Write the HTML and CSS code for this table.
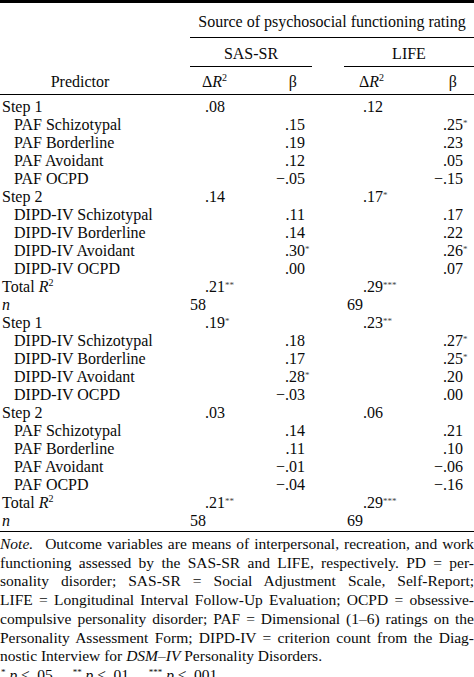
FILE: index.html
```html
<!DOCTYPE html>
<html>
<head>
<meta charset="utf-8">
<link rel="stylesheet" href="styles.css">
</head>
<body>
<table class="tbl">
  <colgroup>
    <col class="c-stub"><col class="c-dr"><col class="c-b"><col class="c-gap"><col class="c-dr2"><col class="c-b2">
  </colgroup>
  <thead>
    <tr class="h1">
      <th></th>
      <th colspan="5" class="src rule">Source of psychosocial functioning rating</th>
    </tr>
    <tr class="h2">
      <th></th>
      <th colspan="2" class="grp rule">SAS-SR</th>
      <th></th>
      <th colspan="2" class="grp rule">LIFE</th>
    </tr>
    <tr class="h3">
      <th class="pred">Predictor</th>
      <th class="hd1">Δ<i>R</i><sup class="sq">2</sup></th>
      <th class="hb1">β</th>
      <th></th>
      <th class="hd2">Δ<i>R</i><sup class="sq">2</sup></th>
      <th class="hb2">β</th>
    </tr>
  </thead>
  <tbody>
    <tr class="first"><td class="stub">Step 1</td><td class="d1">.08</td><td class="v1"></td><td></td><td class="d2">.12</td><td class="v2"></td></tr>
    <tr><td class="ind">PAF Schizotypal</td><td></td><td class="v1">.15<span class="st"></span></td><td></td><td></td><td class="v2">.25<span class="st"><sup class="s">*</sup></span></td></tr>
    <tr><td class="ind">PAF Borderline</td><td></td><td class="v1">.19<span class="st"></span></td><td></td><td></td><td class="v2">.23<span class="st"></span></td></tr>
    <tr><td class="ind">PAF Avoidant</td><td></td><td class="v1">.12<span class="st"></span></td><td></td><td></td><td class="v2">.05<span class="st"></span></td></tr>
    <tr><td class="ind">PAF OCPD</td><td></td><td class="v1">−.05<span class="st"></span></td><td></td><td></td><td class="v2">−.15<span class="st"></span></td></tr>
    <tr><td class="stub">Step 2</td><td class="d1">.14</td><td></td><td></td><td class="d2">.17<sup class="s">*</sup></td><td></td></tr>
    <tr><td class="ind">DIPD-IV Schizotypal</td><td></td><td class="v1">.11<span class="st"></span></td><td></td><td></td><td class="v2">.17<span class="st"></span></td></tr>
    <tr><td class="ind">DIPD-IV Borderline</td><td></td><td class="v1">.14<span class="st"></span></td><td></td><td></td><td class="v2">.22<span class="st"></span></td></tr>
    <tr><td class="ind">DIPD-IV Avoidant</td><td></td><td class="v1">.30<span class="st"><sup class="s">*</sup></span></td><td></td><td></td><td class="v2">.26<span class="st"><sup class="s">*</sup></span></td></tr>
    <tr><td class="ind">DIPD-IV OCPD</td><td></td><td class="v1">.00<span class="st"></span></td><td></td><td></td><td class="v2">.07<span class="st"></span></td></tr>
    <tr><td class="stub">Total <i>R</i><sup class="sq">2</sup></td><td class="d1">.21<sup class="s">**</sup></td><td></td><td></td><td class="d2">.29<sup class="s">***</sup></td><td></td></tr>
    <tr><td class="stub"><i>n</i></td><td class="d1 nn">58</td><td></td><td></td><td class="d2 nn">69</td><td></td></tr>
    <tr><td class="stub">Step 1</td><td class="d1">.19<sup class="s">*</sup></td><td></td><td></td><td class="d2">.23<sup class="s">**</sup></td><td></td></tr>
    <tr><td class="ind">DIPD-IV Schizotypal</td><td></td><td class="v1">.18<span class="st"></span></td><td></td><td></td><td class="v2">.27<span class="st"><sup class="s">*</sup></span></td></tr>
    <tr><td class="ind">DIPD-IV Borderline</td><td></td><td class="v1">.17<span class="st"></span></td><td></td><td></td><td class="v2">.25<span class="st"><sup class="s">*</sup></span></td></tr>
    <tr><td class="ind">DIPD-IV Avoidant</td><td></td><td class="v1">.28<span class="st"><sup class="s">*</sup></span></td><td></td><td></td><td class="v2">.20<span class="st"></span></td></tr>
    <tr><td class="ind">DIPD-IV OCPD</td><td></td><td class="v1">−.03<span class="st"></span></td><td></td><td></td><td class="v2">.00<span class="st"></span></td></tr>
    <tr><td class="stub">Step 2</td><td class="d1">.03</td><td></td><td></td><td class="d2">.06</td><td></td></tr>
    <tr><td class="ind">PAF Schizotypal</td><td></td><td class="v1">.14<span class="st"></span></td><td></td><td></td><td class="v2">.21<span class="st"></span></td></tr>
    <tr><td class="ind">PAF Borderline</td><td></td><td class="v1">.11<span class="st"></span></td><td></td><td></td><td class="v2">.10<span class="st"></span></td></tr>
    <tr><td class="ind">PAF Avoidant</td><td></td><td class="v1">−.01<span class="st"></span></td><td></td><td></td><td class="v2">−.06<span class="st"></span></td></tr>
    <tr><td class="ind">PAF OCPD</td><td></td><td class="v1">−.04<span class="st"></span></td><td></td><td></td><td class="v2">−.16<span class="st"></span></td></tr>
    <tr><td class="stub">Total <i>R</i><sup class="sq">2</sup></td><td class="d1">.21<sup class="s">**</sup></td><td></td><td></td><td class="d2">.29<sup class="s">***</sup></td><td></td></tr>
    <tr class="last"><td class="stub"><i>n</i></td><td class="d1 nn">58</td><td></td><td></td><td class="d2 nn">69</td><td></td></tr>
  </tbody>
</table>
<div class="note">
  <div class="ln j"><i class="note-lbl">Note.</i>Outcome variables are means of interpersonal, recreation, and work</div>
  <div class="ln j">functioning assessed by the SAS-SR and LIFE, respectively. PD = per-</div>
  <div class="ln j">sonality disorder; SAS-SR = Social Adjustment Scale, Self-Report;</div>
  <div class="ln j">LIFE = Longitudinal Interval Follow-Up Evaluation; OCPD = obsessive-</div>
  <div class="ln j">compulsive personality disorder; PAF = Dimensional (1–6) ratings on the</div>
  <div class="ln j">Personality Assessment Form; DIPD-IV = criterion count from the Diag-</div>
  <div class="ln">nostic Interview for <i>DSM–IV</i> Personality Disorders.</div>
  <div class="ln fn"><span class="pv"><sup class="s2">*</sup> <i>p</i> ≤ .05.</span><span class="pv"><sup class="s2">**</sup> <i>p</i> ≤ .01.</span><span class="pv"><sup class="s2">***</sup> <i>p</i> ≤ .001.</span></div>
</div>
</body>
</html>
```

FILE: styles.css
```css
html, body {
  margin: 0;
  padding: 0;
  overflow: hidden;
  background: #fff;
}
body {
  font-family: "Liberation Serif", "Times New Roman", serif;
  color: #0a0a0a;
}

.tbl {
  width: 474px;
  table-layout: fixed;
  border-collapse: separate;
  border-spacing: 0;
  border-top: 3px solid #000;
  font-size: 16px;
}
.c-stub { width: 190px; }
.c-dr { width: 60px; }
.c-b { width: 62px; }
.c-gap { width: 32px; }
.c-dr2 { width: 66px; }
.c-b2 { width: 64px; }

.tbl th, .tbl td {
  padding: 0;
  font-weight: normal;
  line-height: 18px;
  white-space: nowrap;
  vertical-align: top;
}

.h1 th { padding-top: 10px; padding-bottom: 6px; }
.h2 th { padding-top: 7px; padding-bottom: 3px; }
.h3 th { padding-top: 6px; padding-bottom: 3px; border-bottom: 1px solid #000; }
.rule { border-bottom: 1px solid #000; }

.src, .grp { text-align: center; }
.pred { text-align: center; padding-right: 30px !important; }
.hd1 { text-align: left; padding-left: 12px !important; }
.hb1 { text-align: right; padding-right: 15px !important; }
.hd2 { text-align: left; padding-left: 15px !important; }
.hb2 { text-align: right; padding-right: 17px !important; }

.first td { padding-top: 3px; }
.last td { padding-bottom: 1px; border-bottom: 1px solid #000; }

.stub { padding-left: 2px !important; text-align: left; }
.ind { padding-left: 14px !important; text-align: left; }
.d1 { padding-left: 15px !important; text-align: left; }
.d2 { padding-left: 19px !important; text-align: left; }
.d1.nn { padding-left: 0 !important; }
.d2.nn { padding-left: 3px !important; }
.v1 { text-align: right; padding-right: 2px !important; }
.v2 { text-align: right; padding-right: 6px !important; }

.st {
  display: inline-block;
  width: 5px;
  text-align: left;
}
.s {
  font-size: 9px;
  line-height: 0;
  vertical-align: 4px;
  color: #444;
}
.sq {
  font-size: 10px;
  line-height: 0;
  vertical-align: 6px;
}

.note {
  margin-top: 3px;
  font-size: 15.5px;
  line-height: 18.7px;
  width: 474px;
}
.ln { white-space: normal; }
.j {
  text-align: justify;
  text-align-last: justify;
}
.note-lbl { margin-right: 12px; }
.fn { padding-left: 1px; }
.pv { margin-right: 16px; }
.s2 {
  font-size: 9px;
  line-height: 0;
  vertical-align: 5px;
}
```
